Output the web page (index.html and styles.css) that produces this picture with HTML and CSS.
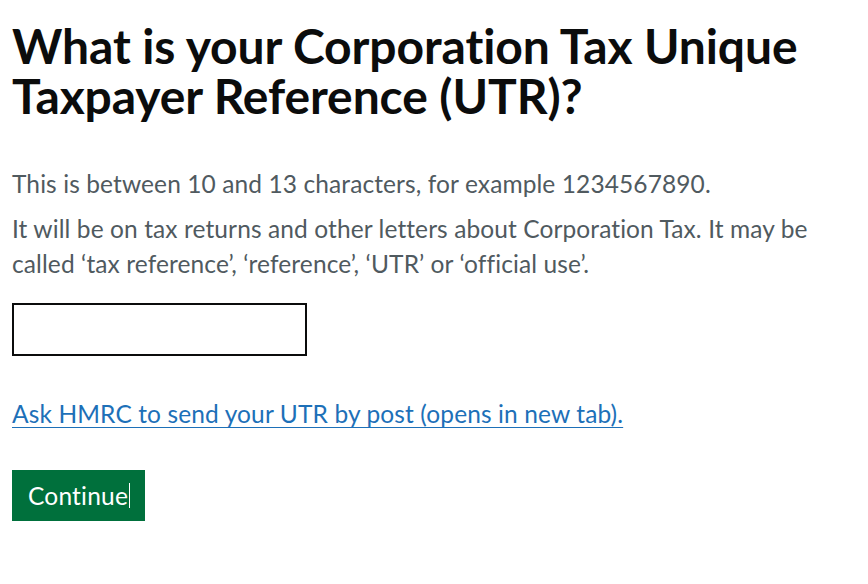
FILE: index.html
```html
<!DOCTYPE html>
<html lang="en">
<head>
<meta charset="utf-8">
<title>What is your Corporation Tax Unique Taxpayer Reference (UTR)?</title>
<link rel="stylesheet" href="styles.css">
</head>
<body>
<main class="page">
  <h1 class="heading">What is your Corporation Tax Unique Taxpayer Reference (UTR)?</h1>
  <p class="hint first">This is between 10 and 13 characters, for example 1234567890.</p>
  <p class="hint">It will be on tax returns and other letters about Corporation Tax. It may be called ‘tax reference’, ‘reference’, ‘UTR’ or ‘official use’.</p>
  <input class="input" type="text" aria-label="UTR">
  <p class="link-row"><a class="link" href="#">Ask HMRC to send your UTR by post (opens in new tab).</a></p>
  <button class="button" type="button">Continue<span class="caret"></span></button>
</main>
</body>
</html>
```

FILE: styles.css
```css
html, body {
  margin: 0;
  padding: 0;
  background: #ffffff;
}
.page {
  padding: 0 12px;
  font-family: Lato, "Noto Sans", sans-serif;
  font-variant-ligatures: none;
  color: #0b0c0c;
  display: flex;
  flex-direction: column;
  align-items: flex-start;
}
.heading {
  margin: 21px 0 0 0;
  font-size: 48px;
  line-height: 50px;
  font-weight: 700;
  width: 830px;
  letter-spacing: -0.1px;
}
.hint {
  margin: 10px 0 0 0;
  font-size: 24.5px;
  line-height: 35px;
  letter-spacing: 0.1px;
  color: #505a5f;
  width: 820px;
}
.hint.first {
  margin-top: 45px;
}
.input {
  margin: 22px 0 0 0;
  width: 295px;
  height: 53px;
  box-sizing: border-box;
  border: 2px solid #0b0c0c;
  padding: 5px;
  font-size: 24px;
  font-family: inherit;
}
.link-row {
  margin: 40px 0 0 0;
  font-size: 24.5px;
  line-height: 35px;
  letter-spacing: 0.12px;
}
.link {
  color: #1d70b8;
  text-decoration: underline;
  text-decoration-thickness: 1px;
  text-underline-offset: 4px;
}
.button {
  margin: 39px 0 0 0;
  width: 133px;
  height: 51px;
  background: #00703c;
  color: #ffffff;
  border: 0;
  box-shadow: 0 2px 0 #002d18;
  font-family: inherit;
  font-variant-ligatures: none;
  font-size: 24.5px;
  letter-spacing: 0.2px;
  padding: 0 0 0 16px;
  display: flex;
  align-items: center;
  justify-content: flex-start;
}
.caret {
  display: inline-block;
  width: 1px;
  height: 25px;
  margin-left: 1px;
  background: #ffffff;
}
```
